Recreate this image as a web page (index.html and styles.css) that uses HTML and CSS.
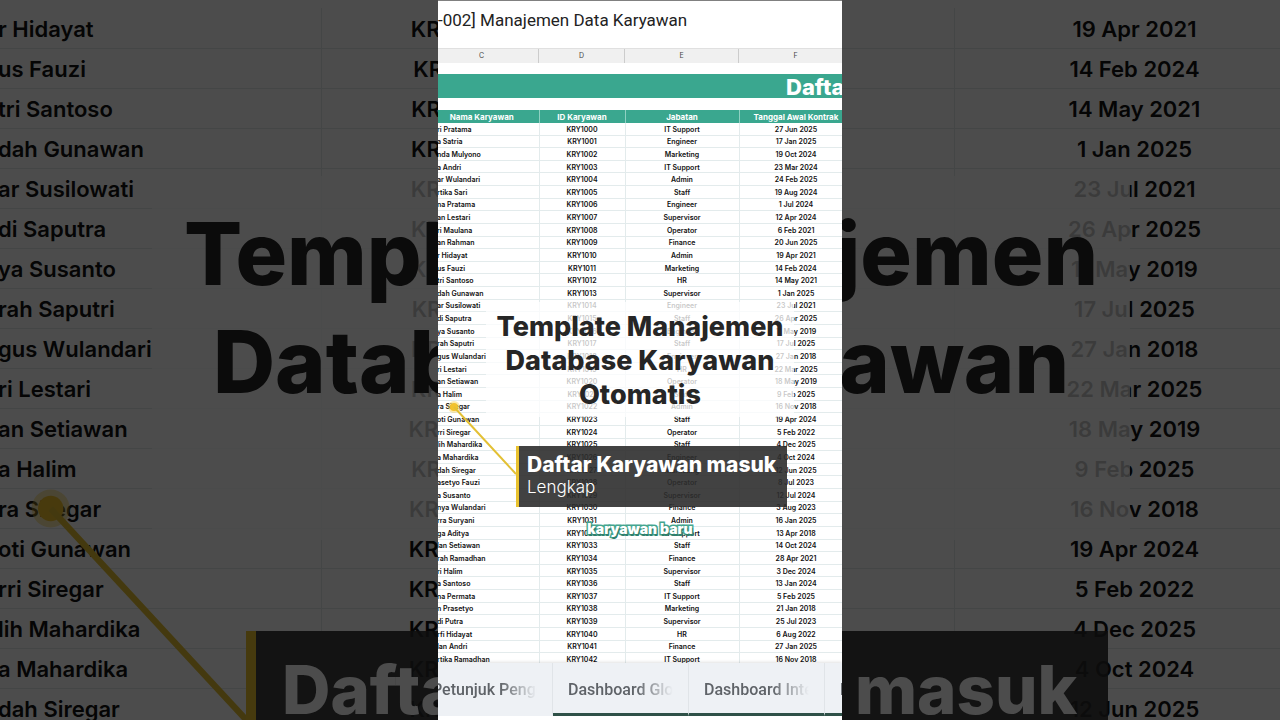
FILE: index.html
```html
<!DOCTYPE html>
<html lang="id">
<head>
    <meta charset="UTF-8">
    <meta name="viewport" content="width=device-width, initial-scale=1.0">
    <title>Template Manajemen Database Karyawan Otomatis</title>
    <link rel="stylesheet" href="styles.css">
</head>
<body>
<!-- Enlarged, dimmed copy behind the frame -->
<div class="backdrop" aria-hidden="true">
    <div class="backdrop-scene">
        <table class="staff staff-large">
            <colgroup><col class="col-name"><col class="col-id"><col class="col-role"><col class="col-date"></colgroup>
            <tbody id="largeRows"></tbody>
        </table>
        <div class="headline">
            <p>Template Manajemen<br>Database Karyawan<br>Otomatis</p>
        </div>
        <svg class="pointer" viewBox="0 0 72 78">
            <circle class="glow" cx="10" cy="9" r="6"/>
            <circle class="dot" cx="10" cy="9" r="4"/>
            <path d="M10 9 L72 76"/>
        </svg>
        <div class="callout">
            <strong>Daftar Karyawan masuk</strong>
            <span>Lengkap</span>
        </div>
    </div>
</div>

<main class="frame">
    <header class="doc-title">-002] Manajemen Data Karyawan</header>
    <div class="letters"><span>C</span><span>D</span><span>E</span><span>F</span></div>
    <div class="sheet">
        <h2 class="sheet-title">Daftar Karyawan</h2>
        <table class="staff">
            <colgroup><col class="col-name"><col class="col-id"><col class="col-role"><col class="col-date"></colgroup>
            <thead>
                <tr><th>Nama Karyawan</th><th>ID Karyawan</th><th>Jabatan</th><th>Tanggal Awal Kontrak</th></tr>
            </thead>
            <tbody id="rows"></tbody>
        </table>
    </div>
    <nav class="tabs">
        <button type="button"><span>Petunjuk Penggunaan</span></button>
        <button type="button" class="linked"><span>Dashboard Global</span></button>
        <button type="button" class="linked"><span>Dashboard Interaktif</span></button>
        <button type="button" class="linked"><span>Data</span></button>
    </nav>

    <div class="headline">
        <h1>Template Manajemen<br>Database Karyawan<br>Otomatis</h1>
    </div>
    <svg class="pointer" viewBox="0 0 72 78">
        <circle class="glow" cx="10" cy="9" r="6"/>
        <circle class="dot" cx="10" cy="9" r="4"/>
        <path d="M10 9 L72 76"/>
    </svg>
    <div class="callout">
        <strong>Daftar Karyawan masuk</strong>
        <span>Lengkap</span>
    </div>
    <p class="caption">karyawan baru</p>
</main>

<script>
    // name, role, contract start
    var staff = [
        ['ri Pratama', 'IT Support', '27 Jun 2025'],
        ['a Satria', 'Engineer', '17 Jan 2025'],
        ['nda Mulyono', 'Marketing', '19 Oct 2024'],
        ['a Andri', 'IT Support', '23 Mar 2024'],
        ['ar Wulandari', 'Admin', '24 Feb 2025'],
        ['rtika Sari', 'Staff', '19 Aug 2024'],
        ['na Pratama', 'Engineer', '1 Jul 2024'],
        ['an Lestari', 'Supervisor', '12 Apr 2024'],
        ['ri Maulana', 'Operator', '6 Feb 2021'],
        ['an Rahman', 'Finance', '20 Jun 2025'],
        ['r Hidayat', 'Admin', '19 Apr 2021'],
        ['us Fauzi', 'Marketing', '14 Feb 2024'],
        ['tri Santoso', 'HR', '14 May 2021'],
        ['dah Gunawan', 'Supervisor', '1 Jan 2025'],
        ['ar Susilowati', 'Engineer', '23 Jul 2021'],
        ['di Saputra', 'Staff', '26 Apr 2025'],
        ['ya Susanto', 'Engineer', '11 May 2019'],
        ['rah Saputri', 'Staff', '17 Jul 2025'],
        ['gus Wulandari', 'Engineer', '27 Jan 2018'],
        ['ri Lestari', 'HR', '22 Mar 2025'],
        ['an Setiawan', 'Operator', '18 May 2019'],
        ['a Halim', 'Staff', '9 Feb 2025'],
        ['ra Siregar', 'Admin', '16 Nov 2018'],
        ['oti Gunawan', 'Staff', '19 Apr 2024'],
        ['rri Siregar', 'Operator', '5 Feb 2022'],
        ['lih Mahardika', 'Staff', '4 Dec 2025'],
        ['a Mahardika', 'Engineer', '4 Oct 2024'],
        ['dah Siregar', 'Marketing', '12 Jun 2025'],
        ['asetyo Fauzi', 'Operator', '8 Jul 2023'],
        ['a Susanto', 'Supervisor', '12 Jul 2024'],
        ['nya Wulandari', 'Finance', '3 Aug 2023'],
        ['rra Suryani', 'Admin', '16 Jan 2025'],
        ['ga Aditya', 'IT Support', '13 Apr 2018'],
        ['lan Setiawan', 'Staff', '14 Oct 2024'],
        ['rah Ramadhan', 'Finance', '28 Apr 2021'],
        ['ri Halim', 'Supervisor', '3 Dec 2024'],
        ['a Santoso', 'Staff', '13 Jan 2024'],
        ['na Permata', 'IT Support', '5 Feb 2025'],
        ['n Prasetyo', 'Marketing', '21 Jan 2018'],
        ['di Putra', 'Supervisor', '25 Jul 2023'],
        ['rfi Hidayat', 'HR', '6 Aug 2022'],
        ['lan Andri', 'Finance', '27 Jan 2025'],
        ['rtika Ramadhan', 'IT Support', '16 Nov 2018']
    ];

    function fillRows(id, from, to) {
        var html = '';
        for (var i = from; i < to; i++) {
            html += '<tr><td>' + staff[i][0] + '</td><td>KRY' + (1000 + i) + '</td><td>' +
                staff[i][1] + '</td><td>' + staff[i][2] + '</td></tr>';
        }
        document.getElementById(id).innerHTML = html;
    }

    fillRows('rows', 0, staff.length);
    fillRows('largeRows', 10, 28);
</script>
</body>
</html>
```
FILE: styles.css
```css
* { box-sizing: border-box; }
body {
    margin: 0;
    height: 100vh;
    display: flex;
    justify-content: center;
    overflow: hidden;
    background-color: #4c4c4c;
    font-family: Inter, "Open Sans", sans-serif;
    color: #111;
}
h1, h2, p { margin: 0; }

/* Frame in the middle */
.frame {
    position: relative;
    height: 100%;
    aspect-ratio: 101 / 180;
    display: flex;
    flex-direction: column;
    overflow: hidden;
    background-color: #fff;
    border-top: 1px solid #808080;
}
.doc-title {
    height: 47px;
    line-height: 38px;
    font-family: Roboto, sans-serif;
    font-size: 17px;
    color: #222;
    white-space: nowrap;
}
.letters {
    flex: none;
    display: grid;
    grid-template-columns: 114px 86px 114px 114px;
    height: 15px;
    margin-left: -13px;
    background-color: #f0f0f0;
    border-top: 1px solid #e0e0e0;
    font-size: 7px;
    line-height: 14px;
    text-align: center;
    color: #444;
}
.letters span { border-right: 1px solid #ccc; }
.sheet {
    flex: 1;
    min-height: 0;
    overflow: hidden;
    padding-top: 11px;
}
.sheet-title {
    height: 24px;
    margin-bottom: 12px;
    padding-left: 348px;
    background-color: #3aa78f;
    color: #fff;
    font-size: 22px;
    line-height: 26px;
    font-weight: 800;
    white-space: nowrap;
}

/* Employee table */
.staff {
    table-layout: fixed;
    width: 428px;
    height: 556px;
    margin-left: -13px;
    border-collapse: collapse;
    font-size: 7px;
    line-height: 8px;
    font-weight: 600;
    text-align: center;
    white-space: nowrap;
}
.col-name, .col-role, .col-date { width: 114px; }
.col-id { width: 86px; }
.staff th {
    padding: 0;
    height: 13px;
    background-color: #3aa78f;
    border-right: 1px solid #8fd0c2;
    color: #fff;
    font-size: 8px;
    font-weight: 700;
}
.staff td {
    padding: 2px 0 0;
    border-right: 1px solid #e3ebec;
    border-bottom: 1px solid #e3ebec;
}
.staff td:first-child {
    padding-left: 12px;
    text-align: left;
}

/* Sheet tabs */
.tabs {
    flex: none;
    display: flex;
    height: 57px;
    margin-left: -21px;
    background-color: #eef1f5;
    border-bottom: 4px solid #fff;
    box-shadow: 0 -1px 3px rgba(0, 0, 0, 0.12);
    position: relative;
}
.tabs button {
    flex: none;
    width: 136px;
    padding: 2px 15px 0;
    background: none;
    border: none;
    border-right: 1px solid #e0e4e8;
    border-bottom: 3px solid transparent;
    font-family: Roboto, sans-serif;
    font-size: 16px;
    font-weight: 500;
    color: #5f6368;
    text-align: left;
    cursor: pointer;
}
.tabs button.linked { border-bottom-color: #2f5148; }
.tabs span {
    display: block;
    overflow: hidden;
    white-space: nowrap;
    mask-image: linear-gradient(to right, #000 65%, transparent);
}

/* Title over the sheet */
.headline {
    position: absolute;
    left: 48px;
    right: 48px;
    top: 301px;
    height: 115px;
    padding-top: 8px;
    background-color: rgba(255, 255, 255, 0.76);
    color: #262626;
    text-align: center;
    white-space: nowrap;
}
.headline h1, .headline p {
    font-size: 27px;
    line-height: 34px;
    font-weight: 800;
}

/* Callout and its pointer */
.pointer {
    position: absolute;
    left: 6px;
    top: 397px;
    width: 72px;
    fill: none;
    stroke: #e3c034;
    stroke-width: 2;
}
.pointer .glow { fill: rgba(245, 200, 50, 0.4); stroke: none; }
.pointer .dot { fill: #f2c22e; stroke: none; }
.callout {
    position: absolute;
    left: 78px;
    top: 445px;
    width: 271px;
    height: 61px;
    padding: 6px 8px;
    border-left: 3px solid #e9c22f;
    background-color: rgba(45, 45, 45, 0.9);
    color: #fff;
    white-space: nowrap;
}
.callout strong {
    display: block;
    font-size: 21px;
    line-height: 26px;
    font-weight: 800;
}
.callout span {
    display: block;
    font-size: 17px;
    line-height: 18px;
    font-weight: 300;
}
.caption {
    position: absolute;
    left: 0;
    right: 0;
    top: 518px;
    font-size: 14px;
    line-height: 20px;
    font-weight: 900;
    text-align: center;
    color: #fff;
    -webkit-text-stroke: 3px #45a68f;
    paint-order: stroke fill;
    text-shadow: 1px 2px 0 #2f7f6c;
}

/* Dimmed backdrop */
.backdrop {
    position: absolute;
    inset: 0;
    display: flex;
    justify-content: center;
    overflow: hidden;
    background-color: #fff;
}
.backdrop::after {
    content: "";
    position: absolute;
    inset: 0;
    background-color: rgba(0, 0, 0, 0.7);
}
.backdrop-scene {
    position: relative;
    flex: none;
    width: 1280px;
    padding-top: 8px;
}
.staff-large {
    width: 1355px;
    height: auto;
    margin-left: -40px;
    font-size: 22px;
    line-height: 26px;
    font-weight: 600;
}
.staff-large .col-name, .staff-large .col-role, .staff-large .col-date { width: 361px; }
.staff-large .col-id { width: 272px; }
.staff-large td { height: 40px; }
.staff-large td:first-child { padding-left: 38px; }
.backdrop .headline {
    left: 152px;
    right: 150px;
    top: 176px;
    height: 364px;
    padding-top: 24px;
}
.backdrop .headline p {
    font-size: 86px;
    line-height: 108px;
}
.backdrop .pointer {
    left: 19px;
    top: 480px;
    width: 228px;
}
.backdrop .callout {
    left: 246px;
    top: 631px;
    width: 862px;
    height: 194px;
    padding: 18px 26px;
    border-left-width: 10px;
}
.backdrop .callout strong {
    font-size: 67px;
    line-height: 82px;
}
.backdrop .callout span {
    font-size: 54px;
    line-height: 64px;
}
```
